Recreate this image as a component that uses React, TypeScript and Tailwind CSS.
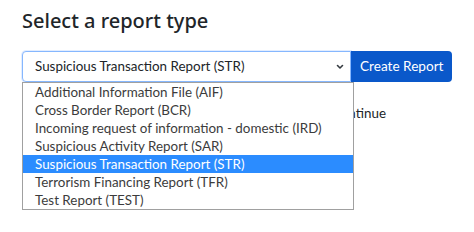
import React from 'react';

const options = [
  'Additional Information File (AIF)',
  'Cross Border Report (BCR)',
  'Incoming request of information - domestic (IRD)',
  'Suspicious Activity Report (SAR)',
  'Suspicious Transaction Report (STR)',
  'Terrorism Financing Report (TFR)',
  'Test Report (TEST)',
];

export default function App() {
  const selected = 'Suspicious Transaction Report (STR)';

  return (
    <div className="min-h-screen bg-white px-[22px] pt-[7px] text-[#212529] font-['Noto_Sans',sans-serif]">
      <h2 className="text-[20px] leading-[28px] font-medium">Select a report type</h2>

      <div className="relative mt-[16px] font-['Lato',sans-serif]">
        {/* Select + button */}
        <div className="flex">
          <div className="relative flex h-[31px] w-[331px] items-center rounded-l-[4px] border border-[#86b7fe] bg-white pl-[12px] shadow-[0_0_0_1px_rgba(13,110,253,0.12)]">
            <span className="whitespace-nowrap text-[13.4px] text-[#212529]">{selected}</span>
            <svg className="absolute right-[6px] top-[12px]" width="8" height="6" viewBox="0 0 8 6">
              <path d="M1.5 1.5 L4 4 L6.5 1.5" fill="none" stroke="#343a40" strokeWidth="1.6" strokeLinecap="round" strokeLinejoin="round" />
            </svg>
          </div>
          <button className="h-[31px] w-[101px] whitespace-nowrap rounded-r-[4px] bg-[#0a58ca] text-[13.6px] text-white">
            Create Report
          </button>
        </div>

        <p className="mt-[21px] w-[364px] whitespace-nowrap text-right text-[13.4px] leading-[20px]">
          Choose a type and click Create Report to continue
        </p>

        {/* Open dropdown list */}
        <ul className="absolute left-0 top-[31px] w-[332px] border border-[#a0a0a0] bg-white text-[13.4px] leading-[18px]">
          {options.map((o) => (
            <li
              key={o}
              className={
                o === selected
                  ? 'h-[18px] whitespace-nowrap bg-[#2b8cff] pl-[12px] text-white'
                  : 'h-[18px] whitespace-nowrap pl-[12px] text-[#3c3c3c]'
              }
            >
              {o}
            </li>
          ))}
        </ul>
      </div>
    </div>
  );
}
